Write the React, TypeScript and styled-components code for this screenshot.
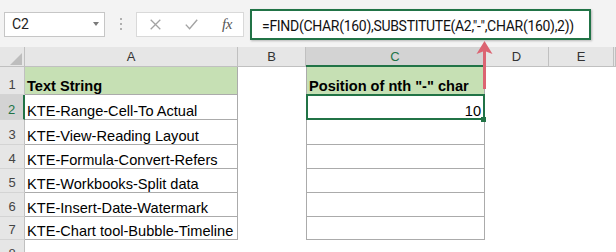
import React from 'react';
import styled, { createGlobalStyle } from 'styled-components';

const Global = createGlobalStyle`
  html, body { margin: 0; padding: 0; background: #ffffff; }
  body { font-family: "Liberation Sans", Arial, sans-serif; }
`;

const Root = styled.div`
  position: relative;
  width: 616px;
  height: 252px;
  overflow: hidden;
  background: #ffffff;
`;

const Toolbar = styled.div`
  display: flex;
  align-items: center;
  height: 47px;
  box-sizing: border-box;
  padding: 1px 0 0 4px;
  background: #f3f3f3;
`;

const NameBox = styled.div`
  box-sizing: border-box;
  width: 101px;
  height: 25px;
  background: #ffffff;
  border: 1px solid #c6c6c6;
  display: flex;
  align-items: center;
  justify-content: space-between;
  padding: 0 5px 0 7px;
  font-family: Roboto, "Liberation Sans", sans-serif;
  font-size: 14px;
  color: #222222;
`;

const Caret = styled.span`
  width: 0;
  height: 0;
  border-left: 3.5px solid transparent;
  border-right: 3.5px solid transparent;
  border-top: 4px solid #7a7a7a;
`;

const Grip = styled.div`
  width: 31px;
  display: flex;
  flex-direction: column;
  align-items: center;
  gap: 3px;
`;

const Dot = styled.span`
  width: 2px;
  height: 2px;
  background: #b0b0b0;
`;

const Buttons = styled.div`
  box-sizing: border-box;
  width: 108px;
  height: 25px;
  background: #ffffff;
  border: 1px solid #d9d9d9;
  display: grid;
  grid-template-columns: repeat(3, 36px);
  align-items: center;
  justify-items: center;
`;

const Fx = styled.span`
  font-family: "Liberation Serif", "Times New Roman", serif;
  font-style: italic;
  font-size: 15px;
  color: #555555;
  letter-spacing: -0.5px;
`;

const FormulaBox = styled.div`
  box-sizing: border-box;
  margin-left: 6px;
  width: 341px;
  height: 31px;
  background: #ffffff;
  border: 2px solid #217346;
  box-shadow: 1px 1px 2px rgba(0, 0, 0, 0.25);
  display: flex;
  align-items: center;
  padding: 4px 0 0 10px;
  font-family: Roboto, "Liberation Sans", sans-serif;
  font-size: 14px;
  letter-spacing: -0.3px;
  color: #111111;
  white-space: nowrap;
`;

const Sheet = styled.div`
  display: grid;
  grid-template-columns: 25px 213px 68px 179px 64px 65px 2px;
  grid-template-rows: 20px 28px 25px 25px 24px 24px 24px 23px 24px;
`;

const Corner = styled.div`
  box-sizing: border-box;
  background: #e6e6e6;
  border-right: 1px solid #c0c0c0;
  border-bottom: 1px solid #c0c0c0;
  display: flex;
  justify-content: flex-end;
  align-items: flex-end;
  padding: 0 2px 1px 0;
`;

const CornerTriangle = styled.span`
  width: 0;
  height: 0;
  border-left: 12px solid transparent;
  border-bottom: 12px solid #bdbdbd;
`;

const ColHeader = styled.div<{ $selected?: boolean }>`
  box-sizing: border-box;
  display: flex;
  align-items: center;
  justify-content: center;
  background: ${(p) => (p.$selected ? '#d3d3d3' : '#e6e6e6')};
  border-right: 1px solid #c0c0c0;
  border-bottom: ${(p) => (p.$selected ? '2px solid #217346' : '1px solid #c0c0c0')};
  font-family: "Liberation Sans", Arial, sans-serif;
  font-size: 13px;
  color: ${(p) => (p.$selected ? '#217346' : '#333333')};
`;

const RowHeader = styled.div<{ $selected?: boolean }>`
  box-sizing: border-box;
  display: flex;
  align-items: flex-end;
  justify-content: center;
  padding-bottom: 1px;
  background: ${(p) => (p.$selected ? '#d3d3d3' : '#e6e6e6')};
  border-right: ${(p) => (p.$selected ? '2px solid #217346' : '1px solid #c0c0c0')};
  border-bottom: 1px solid #d4d4d4;
  font-family: "Liberation Sans", Arial, sans-serif;
  font-size: 13px;
  line-height: 16px;
  color: ${(p) => (p.$selected ? '#217346' : '#444444')};
`;

const Cell = styled.div<{
  $box?: boolean;
  $left?: boolean;
  $fill?: boolean;
  $bold?: boolean;
  $right?: boolean;
  $active?: boolean;
}>`
  position: relative;
  box-sizing: border-box;
  display: flex;
  align-items: flex-end;
  justify-content: ${(p) => (p.$right ? 'flex-end' : 'flex-start')};
  padding: 0 3px 0 2px;
  font-size: 14.6px;
  line-height: 16px;
  font-weight: ${(p) => (p.$bold ? 700 : 400)};
  color: #000000;
  white-space: nowrap;
  background: ${(p) => (p.$fill ? '#c6e0b4' : 'transparent')};
  border-right: ${(p) => (p.$box ? '1px solid #ababab' : 'none')};
  border-bottom: ${(p) => (p.$box ? '1px solid #ababab' : 'none')};
  border-left: ${(p) => (p.$left ? '1px solid #ababab' : 'none')};
  ${(p) =>
    p.$active
      ? `&::after {
          content: '';
          position: absolute;
          top: -1px;
          left: -1px;
          right: -1px;
          bottom: -1px;
          border: 2px solid #217346;
          pointer-events: none;
        }`
      : ''}
`;

const FillHandle = styled.span`
  position: absolute;
  right: -2px;
  bottom: -3px;
  width: 5px;
  height: 5px;
  background: #217346;
  z-index: 2;
`;

const Arrow = styled.svg`
  position: absolute;
  left: 476px;
  top: 41px;
`;

const columns = ['A', 'B', 'C', 'D', 'E'];

const rows: { a: string; c: string; header?: boolean }[] = [
  { a: 'Text String', c: 'Position of nth "-" char', header: true },
  { a: 'KTE-Range-Cell-To Actual', c: '10' },
  { a: 'KTE-View-Reading Layout', c: '' },
  { a: 'KTE-Formula-Convert-Refers', c: '' },
  { a: 'KTE-Workbooks-Split data', c: '' },
  { a: 'KTE-Insert-Date-Watermark', c: '' },
  { a: 'KTE-Chart tool-Bubble-Timeline', c: '' },
];

export default function App() {
  return (
    <Root>
      <Global />
      <Toolbar>
        <NameBox>
          <span>C2</span>
          <Caret />
        </NameBox>
        <Grip>
          <Dot />
          <Dot />
          <Dot />
        </Grip>
        <Buttons>
          <svg width="11" height="11" viewBox="0 0 11 11">
            <path d="M0.7 0.7 L10.3 10.3 M10.3 0.7 L0.7 10.3" stroke="#a3a3a3" strokeWidth="1.3" fill="none" />
          </svg>
          <svg width="13" height="11" viewBox="0 0 13 11">
            <path d="M0.8 5.6 L4.6 9.8 L12.2 0.8" stroke="#a3a3a3" strokeWidth="1.4" fill="none" />
          </svg>
          <Fx>fx</Fx>
        </Buttons>
        <FormulaBox>=FIND(CHAR(160),SUBSTITUTE(A2,"-",CHAR(160),2))</FormulaBox>
      </Toolbar>
      <Sheet>
        <Corner>
          <CornerTriangle />
        </Corner>
        {columns.map((c) => (
          <ColHeader key={c} $selected={c === 'C'}>
            {c}
          </ColHeader>
        ))}
        <ColHeader />
        {rows.map((r, i) => (
          <React.Fragment key={i}>
            <RowHeader $selected={i === 1}>{i + 1}</RowHeader>
            <Cell $box $fill={r.header} $bold={r.header}>
              {r.a}
            </Cell>
            <Cell />
            <Cell $box $left $fill={r.header} $bold={r.header} $right={!r.header} $active={i === 1}>
              {r.c}
              {i === 1 && <FillHandle />}
            </Cell>
            <Cell />
            <Cell />
            <Cell />
          </React.Fragment>
        ))}
        <RowHeader>8</RowHeader>
        <Cell />
        <Cell />
        <Cell />
        <Cell />
        <Cell />
        <Cell />
      </Sheet>
      <Arrow width="17" height="48" viewBox="0 0 17 48">
        <path d="M8.5 0 L16.5 13 L10 10.5 L10 48 L7 48 L7 10.5 L0.5 13 Z" fill="#dc6472" />
      </Arrow>
    </Root>
  );
}
